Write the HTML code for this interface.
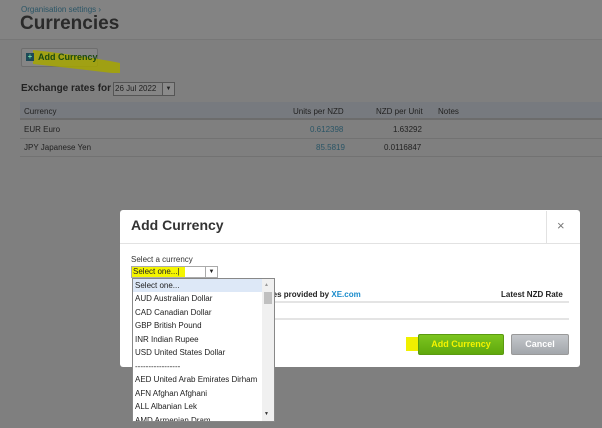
<!DOCTYPE html>
<html><head><meta charset="utf-8"><style>
*{margin:0;padding:0;box-sizing:border-box}
body{width:602px;height:428px;overflow:hidden;background:#7f7f7f;font-family:"Liberation Sans",Tahoma,sans-serif;position:relative;color:#222}
.a{position:absolute}
.t{font-size:8px;color:#222}
</style></head><body>
<div class="a" style="left:0;top:0;width:602px;height:40px;background:#838383;border-bottom:1px solid #777"></div>
<div class="a" style="left:21px;top:5px;font-size:8px;color:#2a5566">Organisation settings ›</div>
<div class="a" style="left:20px;top:13px;font-size:19px;font-weight:bold;color:#2a2a2a">Currencies</div>
<div class="a" style="left:21px;top:48px;width:77px;height:19px;border:1px solid #6e6e6e;background:#858585;border-radius:2px"></div>
<svg class="a" style="left:0;top:0" width="140" height="80"><path d="M33 50 Q70 54 110 61 L120 63 L120 73 L112 73 Q70 68 33 64Z" fill="#a6a600" opacity=".85"/></svg>
<div class="a" style="left:26px;top:53px;width:8px;height:8px;background:#1c4a58;color:#8fb;font-size:8px;line-height:8px;text-align:center">+</div>
<div class="a" style="left:38px;top:52px;font-size:9px;font-weight:bold;color:#1b4a10">Add Currency</div>
<div class="a" style="left:21px;top:83px;font-size:10px;font-weight:bold;color:#222">Exchange rates for</div>
<div class="a" style="left:113px;top:82px;width:62px;height:14px;border:1px solid #555;background:#858585;font-size:8px;line-height:12px;padding-left:1px">26 Jul 2022</div>
<div class="a" style="left:162px;top:83px;width:12px;height:12px;border-left:1px solid #555;background:#8a8a8a;font-size:6px;text-align:center;line-height:12px">▼</div>
<div class="a" style="left:20px;top:102px;width:582px;height:18px;background:#777a7f;border-bottom:2px solid #6c6c6c"></div>
<div class="a t" style="left:24px;top:107px">Currency</div>
<div class="a t" style="left:293px;top:107px">Units per NZD</div>
<div class="a t" style="left:376px;top:107px">NZD per Unit</div>
<div class="a t" style="left:438px;top:107px">Notes</div>
<div class="a" style="left:20px;top:138px;width:582px;height:1px;background:#727272"></div>
<div class="a" style="left:20px;top:156px;width:582px;height:1px;background:#727272"></div>
<div class="a t" style="left:24px;top:125px">EUR Euro</div>
<div class="a t" style="left:310px;top:125px;color:#2a5566">0.612398</div>
<div class="a t" style="left:393px;top:125px">1.63292</div>
<div class="a t" style="left:24px;top:143px">JPY Japanese Yen</div>
<div class="a t" style="left:316px;top:143px;color:#2a5566">85.5819</div>
<div class="a t" style="left:384px;top:143px">0.0116847</div>

<div class="a" style="left:120px;top:210px;width:460px;height:157px;background:#fff;border-radius:3px"></div>
<div class="a" style="left:120px;top:243px;width:460px;height:1px;background:#e2e2e2"></div>
<div class="a" style="left:546px;top:211px;width:1px;height:32px;background:#e2e2e2"></div>
<div class="a" style="left:131px;top:217px;font-size:14px;font-weight:bold;color:#333">Add Currency</div>
<div class="a" style="left:557px;top:218px;font-size:13px;color:#777">×</div>
<div class="a" style="left:131px;top:255px;font-size:8px;color:#333">Select a currency</div>
<div class="a" style="left:131px;top:266px;width:87px;height:12px;border:1px solid #aaa;background:#fff"></div>
<div class="a" style="left:132px;top:267px;width:53px;height:10px;background:#f5f500"></div>
<div class="a" style="left:133px;top:267px;font-size:8px;color:#222">Select one...|</div>
<div class="a" style="left:205px;top:267px;width:12px;height:10px;border-left:1px solid #aaa;font-size:6px;text-align:center;line-height:10px">▼</div>
<div class="a" style="left:270px;top:290px;font-size:8px;font-weight:bold;color:#222">tes provided by <span style="color:#1a8ccc">XE.com</span></div>
<div class="a" style="left:501px;top:290px;font-size:8px;font-weight:bold;color:#222">Latest NZD Rate</div>
<div class="a" style="left:260px;top:301px;width:309px;height:2px;background:#e4e4e4"></div>
<div class="a" style="left:260px;top:318px;width:309px;height:2px;background:#e4e4e4"></div>
<div class="a" style="left:406px;top:337px;width:14px;height:14px;background:#f0f000"></div>
<div class="a" style="left:418px;top:334px;width:86px;height:21px;background:linear-gradient(#7cc520,#5fa80c);border:1px solid #5a9a10;border-radius:2px;color:#f4f400;font-size:9px;font-weight:bold;text-align:center;line-height:19px">Add Currency</div>
<div class="a" style="left:511px;top:334px;width:58px;height:21px;background:linear-gradient(#c4c7cb,#a2a6ab);border:1px solid #999;border-radius:2px;color:#fff;font-size:9px;font-weight:bold;text-align:center;line-height:19px">Cancel</div>

<div class="a" style="left:132px;top:278px;width:143px;height:144px;background:#fff;border:1px solid #888;font-size:8px;color:#222;overflow:hidden">
<div style="background:#dde8f7;height:13px;line-height:13px;padding-left:2px">Select one...</div>
<div style="height:13.5px;line-height:13.5px;padding-left:2px">AUD Australian Dollar</div>
<div style="height:13.5px;line-height:13.5px;padding-left:2px">CAD Canadian Dollar</div>
<div style="height:13.5px;line-height:13.5px;padding-left:2px">GBP British Pound</div>
<div style="height:13.5px;line-height:13.5px;padding-left:2px">INR Indian Rupee</div>
<div style="height:13.5px;line-height:13.5px;padding-left:2px">USD United States Dollar</div>
<div style="height:13.5px;line-height:13.5px;padding-left:2px">-----------------</div>
<div style="height:13.5px;line-height:13.5px;padding-left:2px">AED United Arab Emirates Dirham</div>
<div style="height:13.5px;line-height:13.5px;padding-left:2px">AFN Afghan Afghani</div>
<div style="height:13.5px;line-height:13.5px;padding-left:2px">ALL Albanian Lek</div>
<div style="height:13.5px;line-height:13.5px;padding-left:2px">AMD Armenian Dram</div>
</div>
<div class="a" style="left:262px;top:279px;width:12px;height:142px;background:#f0f0f0"></div>
<div class="a" style="left:264px;top:292px;width:8px;height:12px;background:#c0c0c0"></div>
<div class="a" style="left:264px;top:282px;font-size:5px;color:#999">▲</div>
<div class="a" style="left:264px;top:411px;font-size:5px;color:#333">▼</div>
</body></html>
